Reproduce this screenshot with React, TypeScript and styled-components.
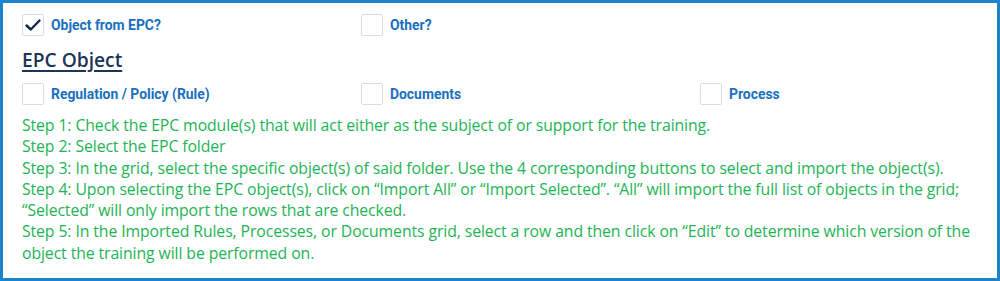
import React from "react";
import styled, { createGlobalStyle } from "styled-components";

const GlobalStyle = createGlobalStyle`
  html, body {
    margin: 0;
    padding: 0;
    background: #ffffff;
  }
`;

const Frame = styled.div`
  box-sizing: border-box;
  width: 1000px;
  height: 281px;
  border: 3px solid #1b83c9;
  padding: 11px 19px 0 19px;
  background: #ffffff;
`;

const OptionRow = styled.div<{ $top?: number }>`
  display: grid;
  grid-template-columns: 339px 339px 1fr;
  align-items: center;
  margin-top: ${(p) => p.$top ?? 0}px;
`;

const Option = styled.label`
  display: flex;
  align-items: center;
  gap: 7px;
`;

const Box = styled.span`
  box-sizing: border-box;
  width: 22px;
  height: 22px;
  border: 1px solid #dcdcdc;
  border-radius: 2px;
  display: flex;
  align-items: center;
  justify-content: center;
  background: #fff;
`;

const OptionLabel = styled.span`
  font-family: Roboto, "Liberation Sans", sans-serif;
  font-weight: 700;
  font-size: 13.9px;
  color: #1a70bf;
`;

const Heading = styled.h2`
  margin: 12px 0 0 0;
  font-family: "Open Sans", "Noto Sans", sans-serif;
  font-weight: 600;
  font-size: 19.2px;
  line-height: 24px;
  color: #1c3557;
  text-decoration: underline;
  text-underline-offset: 3px;
  text-decoration-thickness: 1.5px;
`;

const Steps = styled.div`
  margin-top: 10px;
  font-family: "Open Sans", "Noto Sans", sans-serif;
  font-size: 15.8px;
  line-height: 21.3px;
  font-weight: 500;
  color: #1db455;
  letter-spacing: -0.1px;
`;

const Step = styled.p`
  margin: 0;
`;

const Check = () => (
  <svg width="16" height="14" viewBox="0 0 16 14">
    <path d="M1.5 7.5 L5.8 11.5 L14.5 2.5" fill="none" stroke="#13294b" strokeWidth="2.4" strokeLinecap="round" strokeLinejoin="round" />
  </svg>
);

const CheckItem = ({ label, checked }: { label: string; checked?: boolean }) => (
  <Option>
    <Box>{checked && <Check />}</Box>
    <OptionLabel>{label}</OptionLabel>
  </Option>
);

export default function App() {
  return (
    <>
      <GlobalStyle />
      <Frame>
        <OptionRow>
          <CheckItem label="Object from EPC?" checked />
          <CheckItem label="Other?" />
        </OptionRow>
        <Heading>EPC Object</Heading>
        <OptionRow $top={11}>
          <CheckItem label="Regulation / Policy (Rule)" />
          <CheckItem label="Documents" />
          <CheckItem label="Process" />
        </OptionRow>
        <Steps>
          <Step>Step 1: Check the EPC module(s) that will act either as the subject of or support for the training.</Step>
          <Step>Step 2: Select the EPC folder</Step>
          <Step>Step 3: In the grid, select the specific object(s) of said folder. Use the 4 corresponding buttons to select and import the object(s).</Step>
          <Step>
            Step 4: Upon selecting the EPC object(s), click on “Import All” or “Import Selected”. “All” will import the full list of objects in the grid; “Selected” will only import the rows that are checked.
          </Step>
          <Step>
            Step 5: In the Imported Rules, Processes, or Documents grid, select a row and then click on “Edit” to determine which version of the object the training will be performed on.
          </Step>
        </Steps>
      </Frame>
    </>
  );
}
